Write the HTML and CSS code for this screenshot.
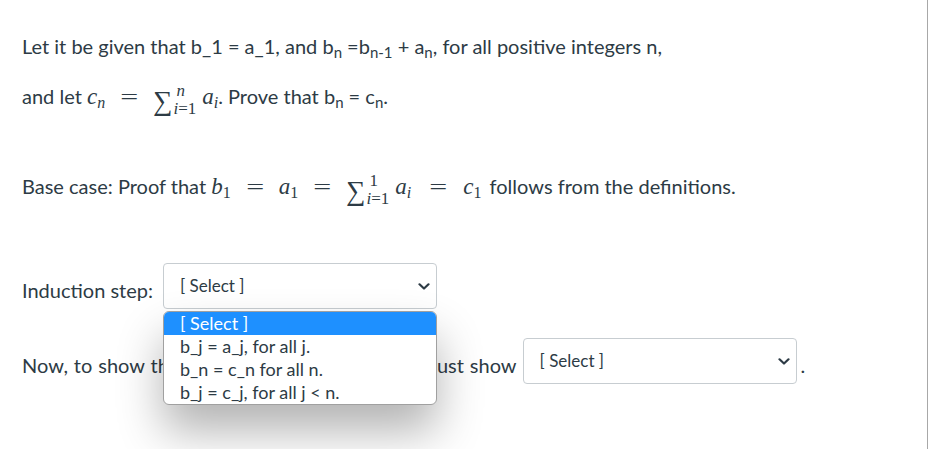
FILE: index.html
```html
<!DOCTYPE html>
<html>
<head>
<meta charset="utf-8">
<link rel="stylesheet" href="styles.css">
</head>
<body>
<div class="page">
  <div class="content">
    <p class="line l1">Let it be given that b_1 = a_1, and b<sub>n</sub> =b<sub>n-1</sub> + a<sub>n</sub>, for all positive integers n,</p>
    <p class="line l2">and let <span class="m"><span class="mi">c</span><span class="msub">n</span></span><span class="mo"><span class="eq">=</span></span><span class="sum"><span class="sig">&sum;</span><span class="lim"><span class="sup">n</span><span class="low"><span class="li">i</span>=1</span></span></span><span class="m"><span class="mi">a</span><span class="msub">i</span></span>. Prove that b<sub>n</sub> = c<sub>n</sub>.</p>
    <p class="line l3">Base case: Proof that <span class="m"><span class="mi">b</span><span class="msubu">1</span></span><span class="mo"><span class="eq">=</span></span><span class="m"><span class="mi">a</span><span class="msubu">1</span></span><span class="mo"><span class="eq">=</span></span><span class="sum"><span class="sig">&sum;</span><span class="lim"><span class="sup up">1</span><span class="low"><span class="li">i</span>=1</span></span></span><span class="m"><span class="mi">a</span><span class="msub">i</span></span><span class="mo last"><span class="eq">=</span></span><span class="m c1"><span class="mi">c</span><span class="msubu">1</span></span> follows from the definitions.</p>
    <div class="row r1">
      <span class="label">Induction step:</span>
      <div class="select">
        <span class="sel-text">[ Select ]</span>
        <svg class="chev" width="12" height="7" viewBox="0 0 12 7"><polyline points="1.5,1.3 6,5.5 10.5,1.3" fill="none" stroke="#2d3b45" stroke-width="2.2" stroke-linecap="round" stroke-linejoin="round"/></svg>
      </div>
      <ul class="menu">
        <li class="opt active">[ Select ]</li>
        <li class="opt">b_j = a_j, for all j.</li>
        <li class="opt">b_n = c_n for all n.</li>
        <li class="opt">b_j = c_j, for all j &lt; n.</li>
      </ul>
    </div>
    <div class="row r2">
      <span class="label">Now, to show that b_n = c_n for every n, we must show</span>
      <div class="select">
        <span class="sel-text">[ Select ]</span>
        <svg class="chev" width="12" height="7" viewBox="0 0 12 7"><polyline points="1.5,1.3 6,5.5 10.5,1.3" fill="none" stroke="#2d3b45" stroke-width="2.2" stroke-linecap="round" stroke-linejoin="round"/></svg>
      </div>
      <span class="label dot">.</span>
    </div>
  </div>
</div>
</body>
</html>
```

FILE: styles.css
```css
html, body {
  margin: 0;
  padding: 0;
  background: #ffffff;
}
.page {
  width: 927px;
  height: 449px;
  border-right: 1px solid #a8a8a8;
  box-sizing: content-box;
  overflow: hidden;
}
.content {
  padding: 31px 0 0 22px;
  font-family: Lato, "Noto Sans", sans-serif;
  font-size: 20px;
  color: #2d3b45;
}
.line {
  margin: 0;
  line-height: 30px;
  height: 30px;
  white-space: nowrap;
}
.l2 { margin-top: 20px; }
.l3 { margin-top: 60px; }
sub {
  font-size: 15px;
  vertical-align: -4px;
  line-height: 0;
}
.m { white-space: nowrap; }
.mi {
  font-family: "Liberation Serif", "DejaVu Serif", serif;
  font-style: italic;
  font-size: 23px;
}
.msub, .msubu {
  font-family: "Liberation Serif", "DejaVu Serif", serif;
  font-size: 16px;
  vertical-align: -4px;
  line-height: 0;
}
.msub { font-style: italic; }
.mo {
  display: inline-block;
  width: 18px;
  margin: 0 15px;
  text-align: center;
  font-family: "Liberation Serif", "DejaVu Serif", serif;
  font-size: 22px;
  line-height: 20px;
}
.mo.last { margin: 0 16px 0 18px; }
.c1 { margin-right: 3px; }
.eq {
  display: inline-block;
  transform: scaleX(1.45);
}
.sum {
  display: inline-flex;
  align-items: center;
  vertical-align: -6px;
  margin-right: 6px;
  line-height: 1;
}
.sig {
  font-family: "Liberation Serif", "DejaVu Serif", serif;
  font-size: 27px;
}
.lim {
  display: inline-flex;
  flex-direction: column;
  font-family: "Liberation Serif", "DejaVu Serif", serif;
  font-size: 17px;
  line-height: 12px;
  margin-left: 1px;
}
.sup { font-style: italic; margin-left: 3px; margin-top: -7px; }
.sup.up { font-style: normal; }
.low { margin-top: 6px; margin-bottom: -3px; }
.li { font-style: italic; }
.row {
  display: flex;
  align-items: flex-end;
  position: relative;
  white-space: nowrap;
}
.r1 { margin-top: 62px; }
.r2 { margin-top: 29px; }
.label {
  line-height: 30px;
  margin-bottom: 4px;
  margin-right: 10px;
}
.r2 .label { margin-right: 6px; word-spacing: 0.8px; }
.r2 .dot { margin-left: 4px; margin-right: 0; }
.select {
  width: 274px;
  height: 46px;
  box-sizing: border-box;
  border: 1px solid #c7cdd1;
  border-radius: 4px;
  background: #fff;
  display: flex;
  align-items: center;
  justify-content: space-between;
  padding: 0 6px 0 16px;
  font-size: 17px;
}
.sel-text { margin-top: -2px; }
.menu {
  position: absolute;
  left: 141px;
  top: 48px;
  width: 274px;
  box-sizing: border-box;
  margin: 0;
  padding: 0;
  list-style: none;
  background: #fff;
  border: 1px solid #a0a0a0;
  border-radius: 6px;
  overflow: hidden;
  box-shadow: 0 26px 46px rgba(0, 0, 0, 0.3);
  z-index: 5;
}
.opt {
  height: 23px;
  line-height: 23px;
  padding-left: 16px;
  font-size: 18px;
  color: #2d3b45;
}
.opt.active {
  background: #1e90ff;
  color: #ffffff;
}
```
